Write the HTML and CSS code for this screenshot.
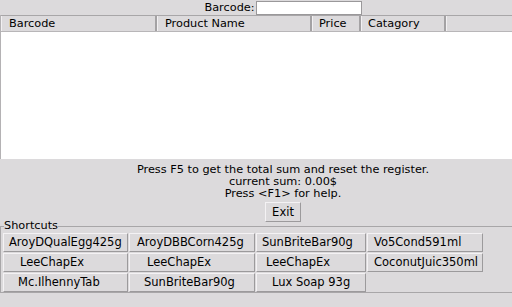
FILE: index.html
```html
<!DOCTYPE html>
<html lang="en">
<head>
    <meta charset="UTF-8">
    <title>Register</title>
    <link rel="stylesheet" href="styles.css">
</head>
<body>
    <div class="barcode-row">
        <label for="barcode">Barcode:</label>
        <input type="text" id="barcode">
    </div>

    <div class="tree">
        <div class="tree-head">
            <div class="col c-barcode">Barcode</div>
            <div class="col c-name">Product Name</div>
            <div class="col c-price">Price</div>
            <div class="col c-cat">Catagory</div>
            <div class="col c-rest"></div>
        </div>
        <div class="tree-body"></div>
    </div>

    <div class="info">
        <div>Press F5 to get the total sum and reset the register.</div>
        <div>current sum: 0.00$</div>
        <div>Press &lt;F1&gt; for help.</div>
        <button class="btn exit">Exit</button>
    </div>

    <fieldset class="shortcuts">
        <legend>Shortcuts</legend>
        <div class="grid">
            <button class="btn sc ind-5">AroyDQualEgg425g</button>
            <button class="btn sc ind-7">AroyDBBCorn425g</button>
            <button class="btn sc ind-5">SunBriteBar90g</button>
            <button class="btn sc ind-6">Vo5Cond591ml</button>
            <button class="btn sc ind-16">LeeChapEx</button>
            <button class="btn sc ind-17">LeeChapEx</button>
            <button class="btn sc ind-9">LeeChapEx</button>
            <button class="btn sc ind-6">CoconutJuic350ml</button>
            <button class="btn sc ind-14">Mc.IlhennyTab</button>
            <button class="btn sc ind-14">SunBriteBar90g</button>
            <button class="btn sc ind-15">Lux Soap 93g</button>
        </div>
    </fieldset>
</body>
</html>
```
FILE: styles.css
```css
body {
    margin: 0;
    width: 512px;
    height: 307px;
    overflow: hidden;
    background-color: #dcdadc;
    font-family: "DejaVu Sans", sans-serif;
    font-size: 11.3px;
    color: #000;
}
.barcode-row {
    display: flex;
    justify-content: center;
    align-items: center;
    padding-left: 54px;
    height: 15px;
}
.barcode-row label {
    margin-right: 1px;
}
.barcode-row input {
    width: 102px;
    height: 10px;
    margin: 0;
    padding: 1px;
    border: 1px solid #9a989a;
    background: #fff;
    font: inherit;
}
.tree {
    border-left: 1px solid #b4b2b4;
}
.tree-head {
    display: flex;
    height: 15px;
    border-top: 1px solid #a8a6a8;
    border-bottom: 1px solid #b8b6b8;
}
.col {
    box-sizing: border-box;
    padding-left: 7px;
    line-height: 15px;
    border-right: 2px solid #a4a2a4;
    border-left: 1px solid #f2f0f2;
}
.c-barcode { width: 156px; }
.c-name { width: 155px; }
.c-price { width: 49px; padding-left: 6px; }
.c-cat { width: 85px; padding-left: 6px; }
.c-rest { flex: 1; border-right: none; }
.tree-body {
    height: 127px;
    background: #fff;
}
.info {
    display: flex;
    flex-direction: column;
    align-items: center;
    padding-left: 54px;
    padding-top: 5px;
    line-height: 12px;
}
.btn {
    font: inherit;
    font-size: 11.5px;
    color: #000;
    background: #dcdadc;
    border: 1px solid;
    border-color: #f4f2f4 #9c9a9c #9c9a9c #f4f2f4;
    margin: 0;
    padding: 0;
    height: 19px;
    line-height: 17px;
}
.exit {
    margin-top: 2px;
    width: 36px;
    height: 20px;
}
.shortcuts {
    margin: 0;
    margin-top: -2px;
    padding: 0 0 0 1px;
    border: 1px solid #a8a6a8;
    border-right: none;
    min-width: 0;
}
.shortcuts legend {
    padding: 0;
    margin-left: 2px;
    line-height: 12px;
}
.grid {
    display: grid;
    grid-template-columns: 125px 126px 110px 116px;
    column-gap: 1px;
    row-gap: 1px;
    padding: 1px 0 0 1px;
}
.sc {
    text-align: left;
    white-space: nowrap;
}
.ind-5 { padding-left: 5px; }
.ind-6 { padding-left: 6px; }
.ind-7 { padding-left: 7px; }
.ind-9 { padding-left: 9px; }
.ind-14 { padding-left: 14px; }
.ind-15 { padding-left: 15px; }
.ind-16 { padding-left: 16px; }
.ind-17 { padding-left: 17px; }
```
